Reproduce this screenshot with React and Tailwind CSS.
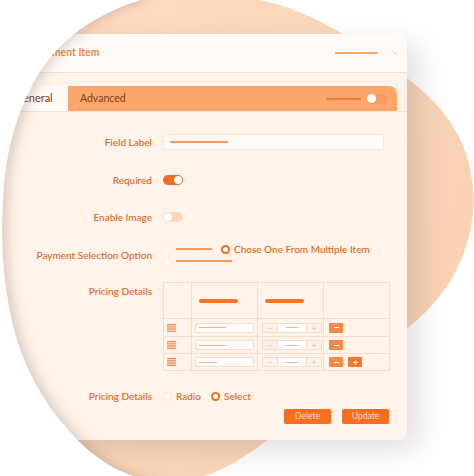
import React from "react";

const blobPath =
  "M140 0 C175 -8, 225 -8, 260 0 C300 8, 335 28, 365 48 C405 75, 440 100, 458 135 C474 165, 478 205, 468 240 C458 275, 440 300, 415 322 L265 442 C230 468, 195 486, 160 482 C120 478, 90 455, 70 432 C45 405, 25 370, 14 330 C4 290, 0 250, 3 200 C5 150, 18 110, 36 78 C58 40, 95 14, 140 0 Z";

const edgePath =
  "M-20 -20 L140 -20 L140 0 C95 14, 58 40, 36 78 C18 110, 5 150, 3 200 C0 250, 4 290, 14 330 C25 370, 45 405, 70 432 C90 455, 120 478, 160 482 L160 500 L-20 500 Z";

function Radio({ on }) {
  return on ? (
    <span className="block h-[9px] w-[9px] shrink-0 rounded-full border-[2.5px] border-[#f26d1f] bg-white" />
  ) : (
    <span className="block h-[9px] w-[9px] shrink-0 rounded-full border border-[#fbe6d8] bg-[#fffaf6]" />
  );
}

function Toggle({ on }) {
  return on ? (
    <span className="flex h-[10px] w-[20px] items-center justify-end rounded-full bg-[#f26d1f] pr-[1px]">
      <span className="h-[8px] w-[8px] rounded-full bg-white" />
    </span>
  ) : (
    <span className="flex h-[10px] w-[20px] items-center rounded-full bg-[#fcd6bb] pl-[1px]">
      <span className="h-[8px] w-[8px] rounded-full bg-white" />
    </span>
  );
}

function Row({ label, children, className = "", align = "items-center" }) {
  return (
    <div className={`flex ${align} ${className}`}>
      <div className="w-[152px] shrink-0 text-right text-[10px] font-medium leading-[12px] text-[#d9671f]">
        {label}
      </div>
      <div className="ml-[11px] flex-1">{children}</div>
    </div>
  );
}

function Bars() {
  return (
    <svg width="9" height="8" viewBox="0 0 9 8">
      <rect x="0" y="0" width="9" height="1.3" fill="#f58a48" />
      <rect x="0" y="2.2" width="9" height="1.3" fill="#f58a48" />
      <rect x="0" y="4.4" width="9" height="1.3" fill="#f58a48" />
      <rect x="0" y="6.6" width="9" height="1.3" fill="#f58a48" />
    </svg>
  );
}

const rows = [
  { line: 27, plus: false },
  { line: 27, plus: false },
  { line: 18, plus: true },
];

export default function App() {
  return (
    <div className="relative h-[476px] w-[474px] overflow-hidden bg-white font-['Lato',sans-serif]">
      <svg className="absolute left-0 top-0" width="474" height="476" viewBox="0 0 474 476">
        <defs>
          <linearGradient id="blob" x1="0" y1="0" x2="1" y2="0.4">
            <stop offset="0" stopColor="#fddcc4" />
            <stop offset="1" stopColor="#f9d2b4" />
          </linearGradient>
        </defs>
        <path d={blobPath} fill="url(#blob)" />
      </svg>

      <div className="relative mt-[34px] flex h-[406px] w-[407px] flex-col rounded-r-[8px] bg-[#fff3ea] shadow-[12px_10px_28px_rgba(70,70,80,0.16)]">
        {/* header */}
        <div className="flex h-[39px] items-center rounded-tr-[8px] border-b border-[#f6e0d1] bg-[#fffaf6] pl-[35px] pr-[9px]">
          <span className="text-[10.5px] font-semibold text-[#e67e37]">Payment Item</span>
          <span className="ml-auto h-[2.5px] w-[43px] rounded-full bg-[#f7a670]" />
          <svg className="ml-[14px]" width="6" height="4" viewBox="0 0 6 4">
            <path d="M0.5 0.5 L3 3 L5.5 0.5" fill="none" stroke="#e6c2ab" strokeWidth="0.8" />
          </svg>
        </div>

        {/* tabs */}
        <div className="mt-[13px] flex h-[26px] border-b border-[#f8e4d6] pr-[10px]">
          <div className="flex w-[68px] items-center bg-[#fffaf6] pl-[15px] text-[11px] text-[#7f3d14]">
            General
          </div>
          <div className="flex flex-1 items-center rounded-tr-[8px] bg-[#fba66d] pl-[12px] pr-[9px]">
            <span className="text-[10.5px] text-[#7f3d14]">Advanced</span>
            <span className="ml-auto h-[2px] w-[35px] rounded-full bg-[#ef7a30]" />
            <span className="ml-[5px] flex h-[10px] w-[22px] items-center rounded-full bg-[#fa9a5c] pl-[1px]">
              <span className="h-[9px] w-[9px] rounded-full bg-white" />
            </span>
          </div>
        </div>

        {/* body */}
        <div className="flex flex-col pr-[18px]">
          <Row label="Field Label" className="mt-[22px]">
            <div className="flex h-[16px] w-[221px] items-center rounded-[2px] border border-[#f8e6d9] bg-[#fffaf6] pl-[6px]">
              <span className="h-[1.5px] w-[58px] bg-[#f59a5c]" />
            </div>
          </Row>

          <Row label="Required" className="mt-[24px]">
            <Toggle on />
          </Row>

          <Row label="Enable Image" className="mt-[25px]">
            <Toggle />
          </Row>

          <Row label="Payment Selection Option" className="mt-[21px]">
            <div className="flex flex-col gap-[2px]">
              <div className="flex h-[10px] items-center">
                <Radio />
                <span className="ml-[4px] h-[1.5px] w-[36px] bg-[#f59a5c]" />
                <span className="ml-[9px]">
                  <Radio on />
                </span>
                <span className="ml-[4px] text-[10px] font-medium leading-[10px] text-[#d9671f]">
                  Chose One From Multiple Item
                </span>
              </div>
              <div className="flex h-[10px] items-center">
                <Radio />
                <span className="ml-[4px] h-[1.5px] w-[56px] bg-[#f59a5c]" />
              </div>
            </div>
          </Row>

          <Row label={<span className="mt-[3px] block">Pricing Details</span>} className="mt-[16px]" align="items-start">
            <table className="w-[226px] table-fixed border-collapse">
              <colgroup>
                <col className="w-[28px]" />
                <col className="w-[66px]" />
                <col className="w-[66px]" />
                <col className="w-[66px]" />
              </colgroup>
              <tbody>
                <tr className="h-[36px]">
                  <td className="border border-[#f7dccb]" />
                  <td className="border border-[#f7dccb] pl-[7px]">
                    <div className="h-[4px] w-[39px] rounded-full bg-[#f5752a]" />
                  </td>
                  <td className="border border-[#f7dccb] pl-[7px]">
                    <div className="h-[4px] w-[39px] rounded-full bg-[#f5752a]" />
                  </td>
                  <td className="border border-[#f7dccb]" />
                </tr>
                {rows.map((r, i) => (
                  <tr key={i} className={i === 0 ? "h-[18px]" : "h-[17px]"}>
                    <td className="border border-[#f7dccb] pl-[3px]">
                      <Bars />
                    </td>
                    <td className="border border-[#f7dccb] pl-[3px]">
                      <div className="flex h-[10px] w-[59px] items-center rounded-[1px] border border-[#f6dccb] bg-[#fffaf7] pl-[3px]">
                        <span className="h-[1px] bg-[#e8b79c]" style={{ width: r.line }} />
                      </div>
                    </td>
                    <td className="border border-[#f7dccb] pl-[4px]">
                      <div className="flex h-[10px] w-[60px] border border-[#f6dccb] text-[7px] leading-[8px] text-[#e2b49b]">
                        <span className="flex w-[14px] items-center justify-center bg-[#fff0e6]">−</span>
                        <span className="flex flex-1 items-center justify-center border-x border-[#f6dccb] bg-white">
                          <span className="h-[1px] w-[12px] bg-[#e8b79c]" />
                        </span>
                        <span className="flex w-[14px] items-center justify-center bg-[#fff0e6]">+</span>
                      </div>
                    </td>
                    <td className="border border-[#f7dccb] pl-[5px]">
                      <div className="flex items-center gap-[5px]">
                        <span className="flex h-[10px] w-[14px] items-center justify-center rounded-[1px] bg-[#f6894a]">
                          <span className="h-[1px] w-[5px] bg-white" />
                        </span>
                        {r.plus && (
                          <span className="relative flex h-[10px] w-[14px] items-center justify-center rounded-[1px] bg-[#f2772f]">
                            <span className="h-[1px] w-[5px] bg-white" />
                            <span className="absolute h-[5px] w-[1px] bg-white" />
                          </span>
                        )}
                      </div>
                    </td>
                  </tr>
                ))}
              </tbody>
            </table>
          </Row>

          <Row label="Pricing Details" className="mt-[19px]">
            <div className="flex h-[10px] items-center text-[10px] font-medium leading-[10px] text-[#d9671f]">
              <Radio />
              <span className="ml-[4px]">Radio</span>
              <span className="ml-[10px]">
                <Radio on />
              </span>
              <span className="ml-[4px]">Select</span>
            </div>
          </Row>

          <div className="mt-[7px] flex justify-end gap-[11px]">
            <button className="h-[15px] w-[47px] rounded-[2px] bg-[#f76e1e] text-[8.5px] leading-[15px] text-[#ffdcc6]">
              Delete
            </button>
            <button className="h-[15px] w-[47px] rounded-[2px] bg-[#f76e1e] text-[8.5px] leading-[15px] text-[#ffdcc6]">
              Update
            </button>
          </div>
        </div>
      </div>

      <svg className="pointer-events-none absolute left-0 top-0" width="474" height="476" viewBox="0 0 474 476">
        <defs>
          <filter id="edge" x="-20%" y="-20%" width="160%" height="140%">
            <feDropShadow dx="5" dy="0" stdDeviation="6" floodColor="#7a5a48" floodOpacity="0.26" />
          </filter>
        </defs>
        <path d={edgePath} fill="#ffffff" filter="url(#edge)" />
      </svg>
    </div>
  );
}
